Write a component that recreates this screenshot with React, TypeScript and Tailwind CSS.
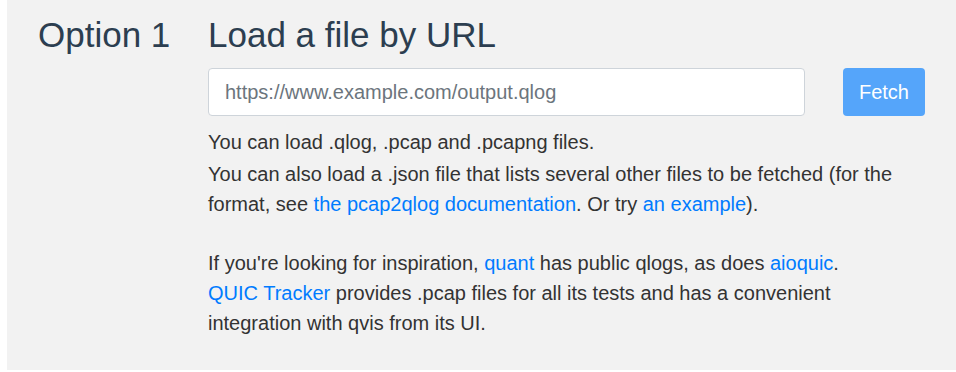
import React from 'react'

const link = 'text-[#007bff] hover:underline'

export default function App() {
  return (
    <div className="bg-white pl-[7px] font-['Liberation_Sans',Arial,sans-serif]">
      <div className="flex bg-[#f2f2f2] pl-[31px] pr-[31px] pt-[14px] pb-[32px]">
        {/* Left label */}
        <div className="w-[170px] shrink-0">
          <h2 className="text-[35px] leading-[42px] text-[#2c3e50]">Option 1</h2>
        </div>

        {/* Right content */}
        <div className="flex-1">
          <h2 className="text-[35px] leading-[42px] text-[#2c3e50]">Load a file by URL</h2>

          <div className="mt-[12px] flex items-center gap-[38px]">
            <input
              type="text"
              placeholder="https://www.example.com/output.qlog"
              className="h-[48px] flex-1 rounded-[4px] border border-[#ced4da] bg-white px-4 text-[20px] text-[#495057] placeholder:text-[#6c757d] outline-none"
            />
            <button
              disabled
              className="h-[48px] rounded-[4px] bg-[#55a5fa] px-4 text-[20px] text-white"
            >
              Fetch
            </button>
          </div>

          <div className="mt-[11px] text-[20px] leading-[30px] text-[#333]">
            <p className="mb-[2px]">You can load .qlog, .pcap and .pcapng files.</p>
            <p>
              You can also load a .json file that lists several other files to be fetched (for the
              format, see{' '}
              <a href="#" className={link}>
                the pcap2qlog documentation
              </a>
              . Or try{' '}
              <a href="#" className={link}>
                an example
              </a>
              ).
            </p>
            <p className="mt-[29px]">
              If you're looking for inspiration,{' '}
              <a href="#" className={link}>
                quant
              </a>{' '}
              has public qlogs, as does{' '}
              <a href="#" className={link}>
                aioquic
              </a>
              .
              <br />
              <a href="#" className={link}>
                QUIC Tracker
              </a>{' '}
              provides .pcap files for all its tests and has a convenient integration with qvis
              from its UI.
            </p>
          </div>
        </div>
      </div>
    </div>
  )
}
